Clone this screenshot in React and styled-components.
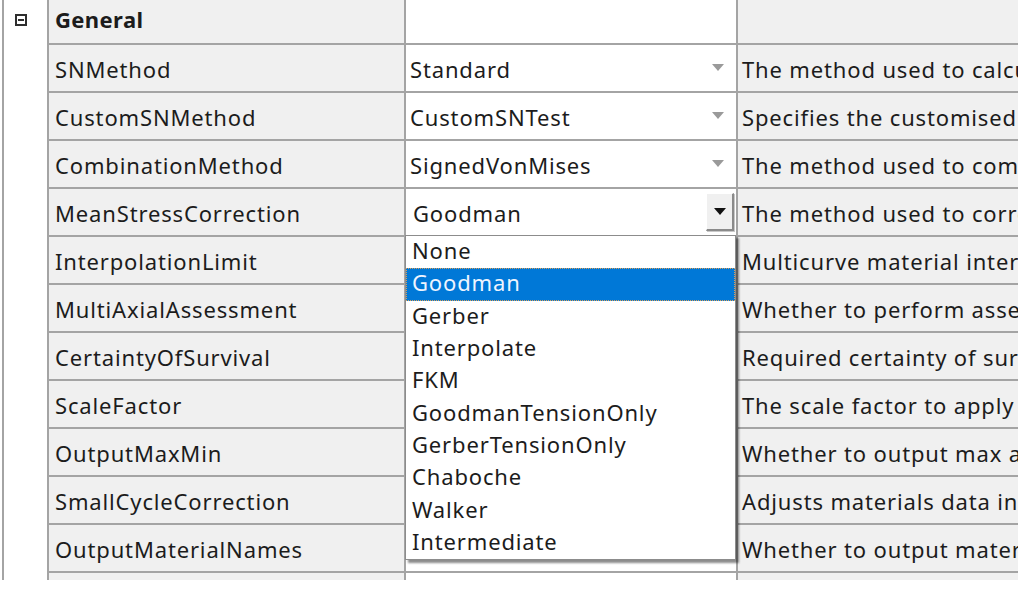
import React from 'react';
import styled, { createGlobalStyle } from 'styled-components';

const GlobalStyle = createGlobalStyle`
  html, body {
    margin: 0;
    padding: 0;
    background: #ffffff;
  }
  body {
    font-family: "Noto Sans", "Open Sans", sans-serif;
    color: #1c1c1c;
  }
`;

const LINE = '#a4a4a4';

const Page = styled.div`
  width: 1018px;
  height: 602px;
  overflow: hidden;
  background: #ffffff;
`;

const Grid = styled.div`
  display: grid;
  grid-template-columns: 47px 359px 332px 280px;
  grid-template-rows: 45px repeat(12, 48px);
  height: 580px;
  overflow: hidden;
  font-size: 22px;
  letter-spacing: 0.85px;
`;

const Gutter = styled.div`
  grid-row: 1 / -1;
  grid-column: 1;
  margin-left: 2px;
  border-left: 2px solid ${LINE};
  background: #ffffff;
`;

const Collapse = styled.div`
  margin: 14px 0 0 11px;
  width: 12px;
  height: 12px;
  box-sizing: border-box;
  border: 2px solid #2e2e2e;
  display: flex;
  align-items: center;
  justify-content: center;

  &::after {
    content: '';
    width: 6px;
    height: 2px;
    background: #2e2e2e;
  }
`;

const Cell = styled.div`
  display: flex;
  align-items: center;
  border-bottom: 2px solid ${LINE};
  white-space: nowrap;
  overflow: ${(p) => (p.$open ? 'visible' : 'hidden')};
  position: relative;
  padding-top: ${(p) => (p.$head ? '0' : '2px')};
  padding-bottom: ${(p) => (p.$head ? '5px' : '0')};
  box-sizing: border-box;
`;

const NameCell = styled(Cell)`
  background: #f0f0f0;
  border-left: 2px solid ${LINE};
  border-right: 2px solid ${LINE};
  padding-left: 6px;
  font-weight: ${(p) => (p.$head ? 700 : 400)};
  letter-spacing: ${(p) => (p.$head ? '0.4px' : 'inherit')};
`;

const ValueCell = styled(Cell)`
  background: #ffffff;
  border-right: 2px solid ${LINE};
  padding-left: 4px;
  padding-right: 12px;
  z-index: ${(p) => (p.$open ? 5 : 'auto')};
`;

const DescCell = styled(Cell)`
  background: #f0f0f0;
  padding-left: 4px;
`;

const ValueText = styled.span`
  flex: 1;
  padding-left: ${(p) => (p.$edit ? '3px' : '0')};
`;

const GrayArrow = styled.span`
  width: 0;
  height: 0;
  border-left: 6px solid transparent;
  border-right: 6px solid transparent;
  border-top: 7px solid #9a9a9a;
  margin-top: -4px;
`;

const DropButton = styled.div`
  width: 28px;
  height: 38px;
  margin-right: -10px;
  margin-top: -2px;
  box-sizing: border-box;
  background: #f0f0f0;
  border-top: 1px solid #ffffff;
  border-left: 1px solid #ffffff;
  border-right: 2px solid #8a8a8a;
  border-bottom: 2px solid #8a8a8a;
  box-shadow: 1px 1px 0 #c8c8c8;
  display: flex;
  align-items: center;
  justify-content: center;

  &::after {
    content: '';
    width: 0;
    height: 0;
    border-left: 6px solid transparent;
    border-right: 6px solid transparent;
    border-top: 7px solid #111111;
  }
`;

const Popup = styled.ul`
  position: absolute;
  top: 100%;
  left: -1px;
  width: 331px;
  margin: 0;
  padding: 0;
  list-style: none;
  background: #ffffff;
  border: 1px solid #8c8c8c;
  box-sizing: border-box;
  box-shadow: 3px 3px 2px rgba(0, 0, 0, 0.45);
  z-index: 10;
`;

const Option = styled.li`
  height: 32.3px;
  display: flex;
  align-items: center;
  padding: 0 0 4px 6px;
  box-sizing: border-box;
  background: ${(p) => (p.$selected ? '#0078d7' : 'transparent')};
  color: ${(p) => (p.$selected ? '#eef4ff' : '#1c1c1c')};
  outline: ${(p) => (p.$selected ? '1px dotted #d9a05a' : 'none')};
  outline-offset: -1px;
`;

const rows = [
  ['SNMethod', 'Standard', 'The method used to calculate the life from the SN curve'],
  ['CustomSNMethod', 'CustomSNTest', 'Specifies the customised SN method to use'],
  ['CombinationMethod', 'SignedVonMises', 'The method used to combine the stress components'],
  ['MeanStressCorrection', 'Goodman', 'The method used to correct for mean stress', true],
  ['InterpolationLimit', '', 'Multicurve material interpolation limit'],
  ['MultiAxialAssessment', '', 'Whether to perform assessment of multiaxiality'],
  ['CertaintyOfSurvival', '', 'Required certainty of survival'],
  ['ScaleFactor', '', 'The scale factor to apply to the loading'],
  ['OutputMaxMin', '', 'Whether to output max and min stresses'],
  ['SmallCycleCorrection', '', 'Adjusts materials data in the small cycle region'],
  ['OutputMaterialNames', '', 'Whether to output material names'],
  ['', '', ''],
];

const options = [
  'None',
  'Goodman',
  'Gerber',
  'Interpolate',
  'FKM',
  'GoodmanTensionOnly',
  'GerberTensionOnly',
  'Chaboche',
  'Walker',
  'Intermediate',
];

const App = () => (
  <Page>
    <GlobalStyle />
    <Grid>
      <Gutter>
        <Collapse />
      </Gutter>
      <NameCell $head>General</NameCell>
      <ValueCell $head />
      <DescCell $head />
      {rows.map(([name, value, desc, open], i) => (
        <React.Fragment key={i}>
          <NameCell>{name}</NameCell>
          <ValueCell $open={open}>
            <ValueText $edit={open}>{value}</ValueText>
            {value && !open && <GrayArrow />}
            {open && <DropButton />}
            {open && (
              <Popup>
                {options.map((o) => (
                  <Option key={o} $selected={o === value}>
                    {o}
                  </Option>
                ))}
              </Popup>
            )}
          </ValueCell>
          <DescCell>{desc}</DescCell>
        </React.Fragment>
      ))}
    </Grid>
  </Page>
);

export default App;
